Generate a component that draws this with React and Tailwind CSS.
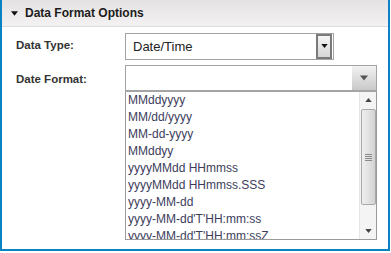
import React from 'react';

const formats = [
  'MMddyyyy',
  'MM/dd/yyyy',
  'MM-dd-yyyy',
  'MMddyy',
  'yyyyMMdd HHmmss',
  'yyyyMMdd HHmmss.SSS',
  'yyyy-MM-dd',
  "yyyy-MM-dd'T'HH:mm:ss",
  "yyyy-MM-dd'T'HH:mm:ssZ",
];

function Tri({ up, className }) {
  return (
    <svg width="8" height="5" viewBox="0 0 8 5" className={className}>
      {up ? <path d="M0 5 L4 0 L8 5 Z" fill="currentColor" /> : <path d="M0 0 L8 0 L4 5 Z" fill="currentColor" />}
    </svg>
  );
}

export default function App() {
  return (
    <div className="w-[391px] h-[253px] bg-white" style={{ fontFamily: '"Liberation Sans", Arial, sans-serif' }}>
      <div className="w-[390px] h-[251px] border-x-2 border-b-2 border-[#0a82c4] flex flex-col overflow-hidden">
        {/* header */}
        <div className="h-[27px] flex items-center pl-[9px] bg-gradient-to-b from-[#e4e2e2] to-[#f3f1f1] border-b border-[#dcdcdc]">
          <Tri className="text-[#111] w-[7px] h-[5px] mr-[7px]" />
          <span className="text-[12px] font-bold text-[#1c1c1c]">Data Format Options</span>
        </div>

        {/* body */}
        <div className="pl-[14px] pt-[5px] flex flex-col">
          <div className="flex items-center h-[28px]">
            <span className="w-[109px] text-[11.5px] font-bold text-[#333]">Data Type:</span>
            <div className="w-[209px] h-[27px] border border-[#a4a4a4] flex items-center bg-white">
              <span className="flex-1 pl-[7px] pt-[1px] text-[13px] text-[#222]">Date/Time</span>
              <div className="w-[16px] h-[25px] mr-[1px] border-2 border-[#7a7a7a] bg-gradient-to-b from-[#f4f4f4] to-[#d6d6d6] flex items-center justify-center">
                <Tri className="text-[#111] w-[7px] h-[4px]" />
              </div>
            </div>
          </div>

          <div className="flex mt-[5px]">
            <span className="w-[109px] text-[11.5px] font-bold text-[#333] pt-[6px]">Date Format:</span>
            <div className="w-[252px] flex flex-col">
              <div className="h-[27px] border border-[#a4a4a4] border-b-2 flex items-center bg-white">
                <span className="flex-1" />
                <div className="w-[24px] h-full bg-gradient-to-b from-[#f2f2f2] to-[#c9c9c9] flex items-center justify-center">
                  <Tri className="text-[#555] w-[8px] h-[6px]" />
                </div>
              </div>
              <div className="h-[148px] border border-t-0 border-[#9a9a9a] flex overflow-hidden">
                <div className="flex-1 pl-[2px] flex flex-col">
                  {formats.map((f) => (
                    <div key={f} className="h-[17px] leading-[17px] text-[12px] text-[#3d3d5c] whitespace-nowrap">
                      {f}
                    </div>
                  ))}
                </div>
                <div className="w-[17px] bg-[#f4f4f4] border-l border-[#e6e6e6] flex flex-col items-center">
                  <div className="h-[16px] flex items-center justify-center">
                    <Tri up className="text-[#444] w-[7px] h-[4px]" />
                  </div>
                  <div className="w-[15px] h-[96px] mt-[1px] rounded-[2px] border border-[#a8a8a8] bg-gradient-to-r from-[#eeeeee] via-[#e2e2e2] to-[#d2d2d2] flex flex-col items-center justify-center gap-[1px]">
                    <div className="w-[7px] h-px bg-[#8a8a8a]" />
                    <div className="w-[7px] h-px bg-[#8a8a8a]" />
                    <div className="w-[7px] h-px bg-[#8a8a8a]" />
                    <div className="w-[7px] h-px bg-[#8a8a8a]" />
                  </div>
                  <div className="flex-1" />
                  <div className="h-[16px] flex items-center justify-center">
                    <Tri className="text-[#444] w-[7px] h-[4px]" />
                  </div>
                </div>
              </div>
            </div>
          </div>
        </div>
      </div>
    </div>
  );
}
